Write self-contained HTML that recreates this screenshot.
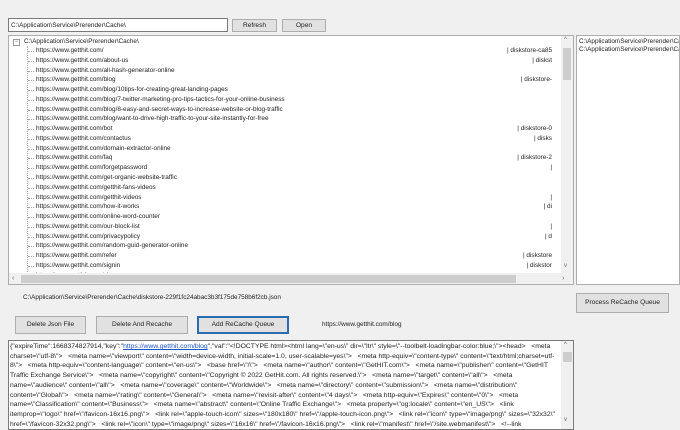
<!DOCTYPE html>
<html><head><meta charset="utf-8"><style>
*{box-sizing:border-box;margin:0;padding:0}
body{width:680px;height:429px;background:#f0f0f0;font-family:"Liberation Sans",sans-serif;font-size:6.4px;color:#222;position:relative;overflow:hidden}
.a{position:absolute;white-space:nowrap}
.box{position:absolute;background:#fff;border:1px solid #adadad}
.btn{position:absolute;background:#e1e1e1;border:1px solid #adadad;text-align:center;font-size:6.6px}
.row{position:absolute;left:27px;white-space:nowrap;line-height:8px}
.dash{position:absolute;left:19px;width:6px;border-top:1px dotted #aaa}
.r{position:absolute;right:21px;white-space:nowrap;line-height:8px}
.sb{position:absolute;background:#f0f0f0}
</style></head><body>
<div class="box" style="left:8px;top:18px;width:220px;height:14px;border-color:#7a7a7a"><span class="a" style="left:2px;top:3px">C:\Application\Service\Prerender\Cache\</span></div>
<div class="btn" style="left:232px;top:19px;width:45px;height:13px;line-height:11px">Refresh</div>
<div class="btn" style="left:282px;top:19px;width:44px;height:13px;line-height:11px">Open</div>

<div class="box" style="left:8px;top:35px;width:566px;height:250px;overflow:hidden">
<div class="a" style="left:4px;top:3px;width:7px;height:7px;border:1px solid #999;font-size:6px;line-height:5px;text-align:center;color:#555">−</div>
<span class="a" style="left:15px;top:2px;line-height:8px">C:\Application\Service\Prerender\Cache\</span>
<div class="a" style="left:18px;top:10px;height:240px;border-left:1px dotted #aaa"></div>
<div id="rows"></div>
<div class="sb" style="left:552px;top:0;width:12px;height:237px"><div class="a" style="left:2px;top:12px;width:8px;height:32px;background:#cdcdcd"></div><span class="a" style="left:3px;top:1px;font-size:6px;color:#666">^</span><span class="a" style="left:3px;top:227px;font-size:6px;color:#666">v</span></div>
<div class="sb" style="left:0;top:237px;width:564px;height:12px"><div class="a" style="left:12px;top:2px;width:495px;height:8px;background:#cdcdcd"></div><span class="a" style="left:3px;top:2px;font-size:7px;color:#666">‹</span><span class="a" style="left:553px;top:2px;font-size:7px;color:#666">›</span></div>
</div>

<div class="box" style="left:576px;top:35px;width:104px;height:250px;overflow:hidden">
<span class="a" style="left:2px;top:2px;line-height:8px">C:\Application\Service\Prerender\Cache\</span>
<span class="a" style="left:2px;top:10px;line-height:8px">C:\Application\Service\Prerender\Cache\</span>
</div>

<span class="a" style="left:23px;top:294px">C:\Application\Service\Prerender\Cache\diskstore-229f1fc24abac3b3f175de758b6f2cb.json</span>
<div class="btn" style="left:576px;top:293px;width:93px;height:20px;line-height:18px">Process ReCache Queue</div>

<div class="btn" style="left:15px;top:316px;width:71px;height:18px;line-height:16px">Delete Json File</div>
<div class="btn" style="left:96px;top:316px;width:92px;height:18px;line-height:16px">Delete And Recache</div>
<div class="btn" style="left:197px;top:316px;width:92px;height:18px;line-height:14px;border:2px solid #2b6cb0">Add ReCache Queue</div>
<span class="a" style="left:322px;top:321px">https://www.getthit.com/blog</span>

<div class="box" style="left:8px;top:340px;width:566px;height:90px;overflow:hidden;border-color:#7a7a7a">
<div class="a" style="left:1px;top:1px;width:550px;line-height:9.7px;white-space:normal;font-size:6.8px">{"expireTime":1668374827914,"key":"<u style="color:#1a56c8">https://www.getthit.com/blog</u>","val":"&lt;!DOCTYPE html&gt;&lt;html lang=\"en-us\" dir=\"ltr\" style=\"--toolbelt-loadingbar-color:blue;\"&gt;&lt;head&gt; &nbsp;&nbsp;&lt;meta charset=\"utf-8\"&gt; &nbsp;&nbsp;&lt;meta name=\"viewport\" content=\"width=device-width, initial-scale=1.0, user-scalable=yes\"&gt; &nbsp;&nbsp;&lt;meta http-equiv=\"content-type\" content=\"text/html;charset=utf-8\"&gt; &nbsp;&nbsp;&lt;meta http-equiv=\"content-language\" content=\"en-us\"&gt; &nbsp;&nbsp;&lt;base href=\"/\"&gt; &nbsp;&nbsp;&lt;meta name=\"author\" content=\"GetHIT.com\"&gt; &nbsp;&nbsp;&lt;meta name=\"publisher\" content=\"GetHIT Traffic Exchange Service\"&gt; &nbsp;&nbsp;&lt;meta name=\"copyright\" content=\"Copyright © 2022 GetHit.com. All rights reserved.\"&gt; &nbsp;&nbsp;&lt;meta name=\"target\" content=\"all\"&gt; &nbsp;&nbsp;&lt;meta name=\"audience\" content=\"all\"&gt; &nbsp;&nbsp;&lt;meta name=\"coverage\" content=\"Worldwide\"&gt; &nbsp;&nbsp;&lt;meta name=\"directory\" content=\"submission\"&gt; &nbsp;&nbsp;&lt;meta name=\"distribution\" content=\"Global\"&gt; &nbsp;&nbsp;&lt;meta name=\"rating\" content=\"General\"&gt; &nbsp;&nbsp;&lt;meta name=\"revisit-after\" content=\"4 days\"&gt; &nbsp;&nbsp;&lt;meta http-equiv=\"Expires\" content=\"0\"&gt; &nbsp;&nbsp;&lt;meta name=\"Classification\" content=\"Business\"&gt; &nbsp;&nbsp;&lt;meta name=\"abstract\" content=\"Online Traffic Exchange\"&gt; &nbsp;&nbsp;&lt;meta property=\"og:locale\" content=\"en_US\"&gt; &nbsp;&nbsp;&lt;link itemprop=\"logo\" href=\"/favicon-16x16.png\"&gt; &nbsp;&nbsp;&lt;link rel=\"apple-touch-icon\" sizes=\"180x180\" href=\"/apple-touch-icon.png\"&gt; &nbsp;&nbsp;&lt;link rel=\"icon\" type=\"image/png\" sizes=\"32x32\" href=\"/favicon-32x32.png\"&gt; &nbsp;&nbsp;&lt;link rel=\"icon\" type=\"image/png\" sizes=\"16x16\" href=\"/favicon-16x16.png\"&gt; &nbsp;&nbsp;&lt;link rel=\"manifest\" href=\"/site.webmanifest\"&gt; &nbsp;&nbsp;&lt;!--link href=\"<u style="color:#1a56c8">https://fonts.googleapis.com/css?family=Open+Sans:300,400,500,700</u>\" rel=\"stylesheet\" /--&gt; &nbsp;&nbsp;&lt;meta name=\"msapplication-TileColor\" content=\"#00aba9\"&gt; &nbsp;&nbsp;&lt;meta name=\"theme-color\" content=\"#ffffff\"&gt;</div>
<div class="sb" style="left:552px;top:0;width:13px;height:90px"><div class="a" style="left:2px;top:11px;width:9px;height:10px;background:#cdcdcd"></div><span class="a" style="left:3px;top:1px;font-size:6px;color:#666">^</span><span class="a" style="left:3px;top:76px;font-size:6px;color:#666">v</span></div>
</div>

<script>
var u=["","about-us","all-hash-generator-online","blog","blog/10tips-for-creating-great-landing-pages","blog/7-twitter-marketing-pro-tips-tactics-for-your-online-business","blog/8-easy-and-secret-ways-to-increase-website-or-blog-traffic","blog/want-to-drive-high-traffic-to-your-site-instantly-for-free","bot","contactus","domain-extractor-online","faq","forgetpassword","get-organic-website-traffic","getthit-fans-videos","getthit-videos","how-it-works","online-word-counter","our-block-list","privacypolicy","random-guid-generator-online","refer","signin","sitemap"];
var r={0:"| diskstore-ca85",1:"| diskst",3:"| diskstore-",8:"| diskstore-0",9:"| disks",11:"| diskstore-2",12:"|",15:"|",16:"| di",18:"|",19:"| d",21:"| diskstore",22:"| diskstor"};
var h="";
for(var i=0;i<u.length;i++){var y=11+i*9.77;
h+='<div class="dash" style="top:'+(y+4)+'px"></div><div class="row" style="top:'+y+'px">https://www.getthit.com/'+u[i]+'</div>';
if(r[i])h+='<div class="r" style="top:'+y+'px">'+r[i]+'</div>';}
document.getElementById("rows").innerHTML=h;
</script>
</body></html>
